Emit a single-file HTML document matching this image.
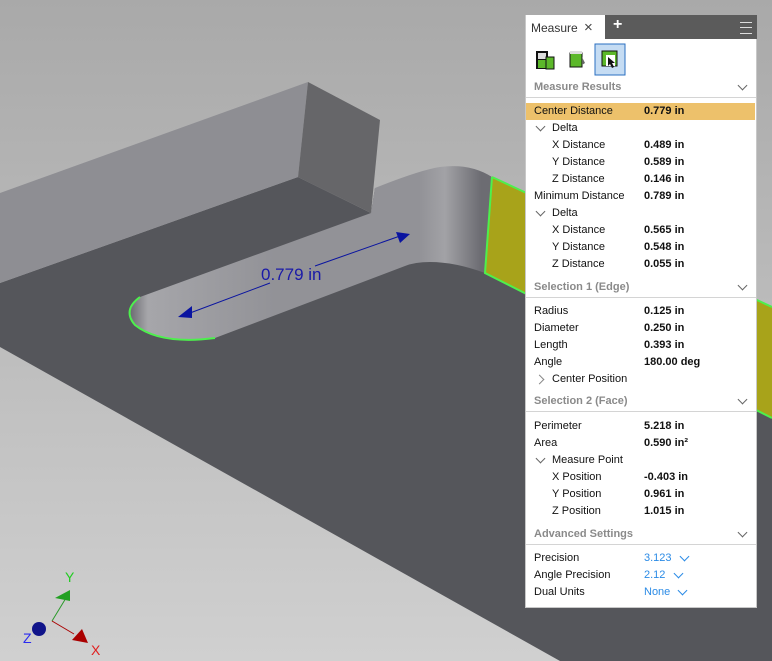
<!DOCTYPE html>
<html><head><meta charset="utf-8"><style>
body{margin:0;width:772px;height:661px;overflow:hidden;position:relative;font-family:"Liberation Sans",sans-serif;}
svg.bg{position:absolute;left:0;top:0}
#p{position:absolute;left:525px;top:15px;width:230px;height:592px;background:#fff;border:1px solid #c8c8c8;border-top:none}
.r{position:absolute;left:0;width:230px;height:17px;font-size:11px;line-height:17px;color:#111;white-space:nowrap}
.r .l{position:absolute;left:8px}
.r .i{position:absolute;left:26px}
.r .v{position:absolute;left:118px;font-weight:bold}
.r .b{position:absolute;left:118px;color:#2b8be6}
.h{position:absolute;left:0;width:230px;height:20px;font-size:11px;font-weight:bold;color:#8a8a8a;line-height:20px;border-bottom:1px solid #d4d4d4}
.h span{position:absolute;left:8px}
.chev{position:absolute;width:6px;height:6px;border-right:1px solid #666;border-bottom:1px solid #666;transform:rotate(45deg)}
.bc{border-color:#2b8be6}
.rc{transform:rotate(-45deg)}
</style></head><body>
<svg class="bg" width="772" height="661" viewBox="0 0 772 661">
<defs>
<linearGradient id="bgg" x1="0" y1="0" x2="0" y2="1"><stop offset="0" stop-color="#a9a9a9"/><stop offset="1" stop-color="#d0d0d0"/></linearGradient>
<linearGradient id="slot" x1="0" y1="0" x2="1" y2="0"><stop offset="0" stop-color="#6a6a70"/><stop offset="0.05" stop-color="#a6a6aa"/><stop offset="0.4" stop-color="#929297"/><stop offset="0.8" stop-color="#929297"/><stop offset="0.87" stop-color="#a2a2a6"/><stop offset="0.97" stop-color="#6c6c72"/></linearGradient>
</defs>
<rect width="772" height="661" fill="url(#bgg)"/>
<polygon points="0,283 298,177 371,213 375,188 485,273 772,418 772,661 560,661 0,347" fill="#55565b"/>
<polygon points="492,177 772,307 772,418 485,273" fill="#a8a31a"/>
<path d="M140,297 L371,213 L375,188 Q420,170 440,167 Q470,163 492,177 L485,273 Q455,262 430,262 Q415,262 405,266 L215,338 Q160,345 135,325 Q122,310 140,297 Z" fill="url(#slot)"/>
<polygon points="0,193 308,82 298,177 0,283" fill="#8e8e93"/>
<polygon points="308,82 380,120 371,213 298,177" fill="#666669"/>
<path d="M492,177 L485,273 L772,418 M492,177 L772,307" stroke="#4df04d" stroke-width="2" fill="none"/>
<path d="M140,297 Q122,310 135,325 Q160,345 215,338" stroke="#4df04d" stroke-width="2" fill="none"/>
<path d="M190,313 L270,283 M315,266 L400,236" stroke="#0a14a0" stroke-width="1"/>
<polygon points="178,317 192,306 192,318" fill="#0a14a0"/>
<polygon points="410,234 396,232 400,243" fill="#0a14a0"/>
<text x="261" y="280" font-size="17" fill="#1a1aa8" font-family="Liberation Sans,sans-serif">0.779 in</text>
<path d="M52,621 L66,598" stroke="#2a9a2a" stroke-width="1"/>
<polygon points="55,598 70,590 70,601" fill="#22a022"/>
<path d="M52,621 L74,634" stroke="#a00" stroke-width="1"/>
<polygon points="72,640 88,643 82,629" fill="#a00"/>
<circle cx="39" cy="629" r="7" fill="#10148a"/>
<text x="65" y="582" font-size="14" fill="#22cc22" font-family="Liberation Sans,sans-serif">Y</text>
<text x="91" y="655" font-size="14" fill="#e02020" font-family="Liberation Sans,sans-serif">X</text>
<text x="23" y="643" font-size="14" fill="#2a2af0" font-family="Liberation Sans,sans-serif">Z</text>
</svg>
<div id="p">
<div style="position:absolute;left:0;top:0;width:231px;height:24px;background:#5b5b5b"></div>
<div style="position:absolute;left:0;top:0;width:79px;height:25px;background:#fff;font-size:12px;line-height:26px;color:#333"><span style="position:absolute;left:5px">Measure</span><span style="position:absolute;left:58px;font-size:15px;color:#444">×</span></div>
<div style="position:absolute;left:87px;top:1px;color:#fff;font-size:16px;font-weight:bold">+</div>
<div style="position:absolute;left:214px;top:7px;width:12px;height:10px;border-top:1px solid #ddd;border-bottom:1px solid #ddd"><div style="margin-top:4px;border-top:1px solid #ddd"></div></div>
<svg style="position:absolute;left:0;top:28px" width="110" height="35">
<rect x="10" y="8" width="12" height="18" fill="#111"/><rect x="12" y="10" width="8" height="6" fill="#ddd"/><rect x="12" y="17" width="8" height="8" fill="#5cb82a"/><rect x="20" y="14" width="8" height="12" fill="#5cb82a" stroke="#111"/>
<rect x="44" y="10" width="12" height="14" fill="#5cb82a" stroke="#111"/><rect x="44" y="8" width="12" height="3" fill="#ddd"/><path d="M56,14 l3,6 l-3,2z" fill="#666"/>
<rect x="69" y="1" width="30" height="31" fill="#c5dcf3" stroke="#2a6fc0"/>
<rect x="76" y="8" width="15" height="15" fill="#5cb82a" stroke="#111"/><rect x="80" y="12" width="9" height="11" fill="#fff"/><path d="M82,14 l0,9 l2,-2 l2,4 l2,-1 l-2,-4 l3,0z" fill="#111"/>
</svg>
<div class="h" style="top:62px"><span>Measure Results</span><i class="chev" style="right:10px;top:5px"></i></div>
<div class="r" style="top:88px;background:#edc16b;width:229px"><span class="l">Center Distance</span><span class="v">0.779 in</span></div>
<div class="r" style="top:105px"><i class="chev" style="left:11px;top:3px"></i><span class="i">Delta</span></div>
<div class="r" style="top:122px"><span class="i">X Distance</span><span class="v">0.489 in</span></div>
<div class="r" style="top:139px"><span class="i">Y Distance</span><span class="v">0.589 in</span></div>
<div class="r" style="top:156px"><span class="i">Z Distance</span><span class="v">0.146 in</span></div>
<div class="r" style="top:173px"><span class="l">Minimum Distance</span><span class="v">0.789 in</span></div>
<div class="r" style="top:190px"><i class="chev" style="left:11px;top:3px"></i><span class="i">Delta</span></div>
<div class="r" style="top:207px"><span class="i">X Distance</span><span class="v">0.565 in</span></div>
<div class="r" style="top:224px"><span class="i">Y Distance</span><span class="v">0.548 in</span></div>
<div class="r" style="top:241px"><span class="i">Z Distance</span><span class="v">0.055 in</span></div>
<div class="h" style="top:262px"><span>Selection 1 (Edge)</span><i class="chev" style="right:10px;top:5px"></i></div>
<div class="r" style="top:288px"><span class="l">Radius</span><span class="v">0.125 in</span></div>
<div class="r" style="top:305px"><span class="l">Diameter</span><span class="v">0.250 in</span></div>
<div class="r" style="top:322px"><span class="l">Length</span><span class="v">0.393 in</span></div>
<div class="r" style="top:339px"><span class="l">Angle</span><span class="v">180.00 deg</span></div>
<div class="r" style="top:356px"><i class="chev rc" style="left:10px;top:5px;border-color:#888"></i><span class="i">Center Position</span></div>
<div class="h" style="top:376px"><span>Selection 2 (Face)</span><i class="chev" style="right:10px;top:5px"></i></div>
<div class="r" style="top:403px"><span class="l">Perimeter</span><span class="v">5.218 in</span></div>
<div class="r" style="top:420px"><span class="l">Area</span><span class="v">0.590 in²</span></div>
<div class="r" style="top:437px"><i class="chev" style="left:11px;top:3px"></i><span class="i">Measure Point</span></div>
<div class="r" style="top:454px"><span class="i">X Position</span><span class="v">-0.403 in</span></div>
<div class="r" style="top:471px"><span class="i">Y Position</span><span class="v">0.961 in</span></div>
<div class="r" style="top:488px"><span class="i">Z Position</span><span class="v">1.015 in</span></div>
<div class="h" style="top:509px"><span>Advanced Settings</span><i class="chev" style="right:10px;top:5px"></i></div>
<div class="r" style="top:535px"><span class="l">Precision</span><span class="b">3.123</span><i class="chev bc" style="left:155px;top:3px"></i></div>
<div class="r" style="top:552px"><span class="l">Angle Precision</span><span class="b">2.12</span><i class="chev bc" style="left:149px;top:3px"></i></div>
<div class="r" style="top:569px"><span class="l">Dual Units</span><span class="b">None</span><i class="chev bc" style="left:153px;top:3px"></i></div>
</div>
</body></html>
